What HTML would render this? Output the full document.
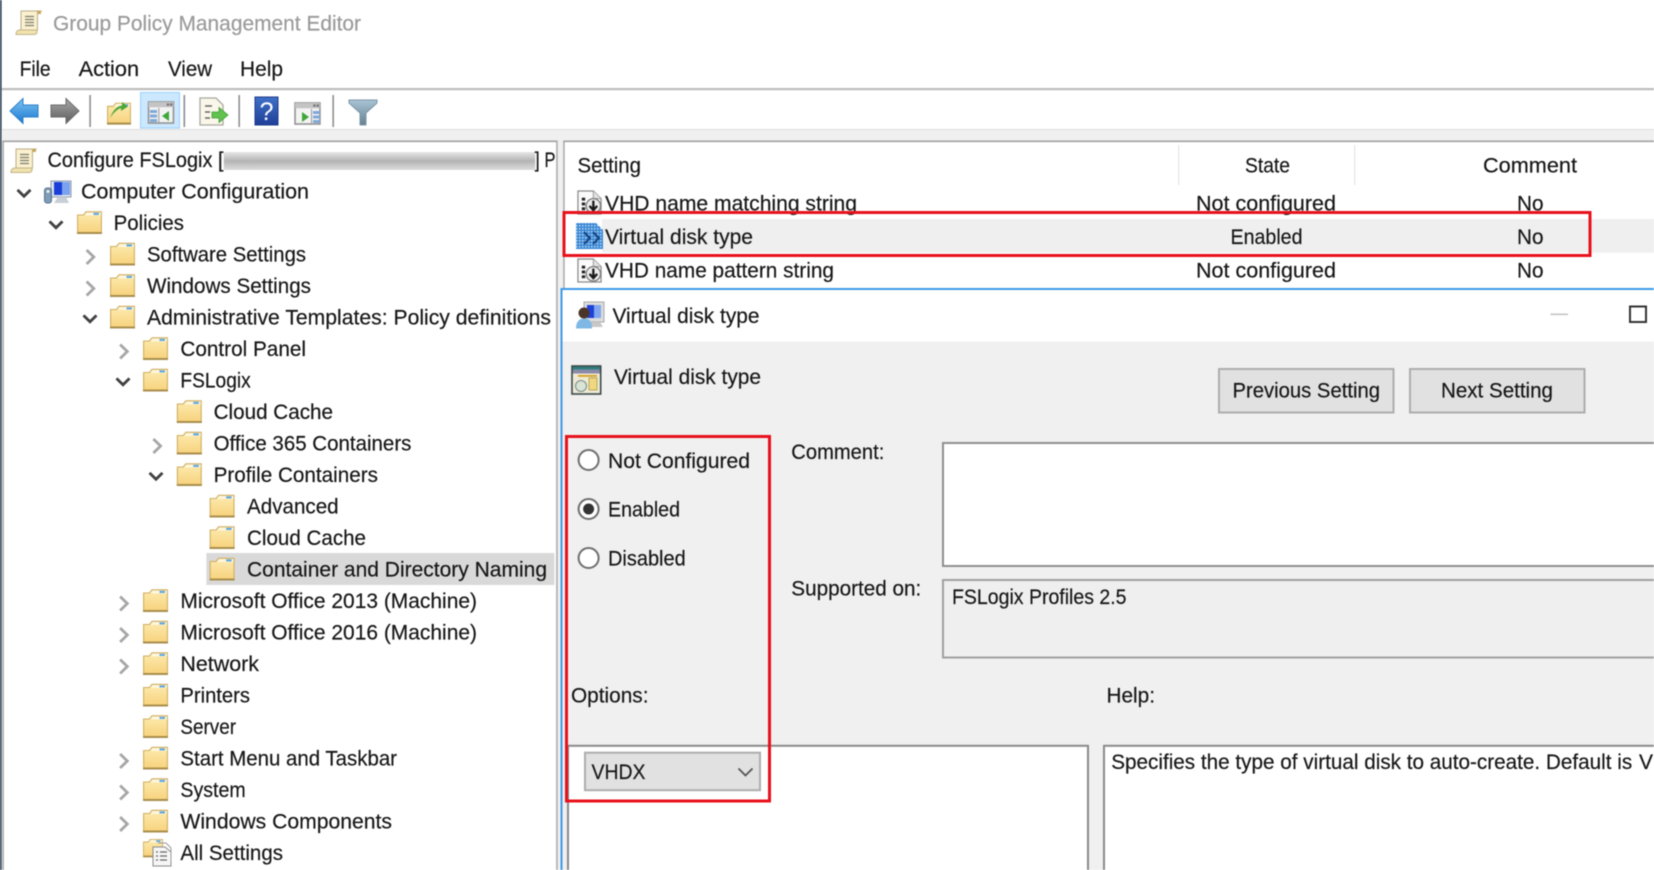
<!DOCTYPE html>
<html><head><meta charset="utf-8"><title>Group Policy Management Editor</title>
<style>
html,body{margin:0;padding:0;width:1654px;height:870px;overflow:hidden;background:#fff}
svg{display:block;filter:blur(0.45px)}
text{font-family:"Liberation Sans",sans-serif;font-size:21px;fill:#161616;stroke:#161616;stroke-width:.18px}
</style></head><body>
<svg xmlns="http://www.w3.org/2000/svg" width="1654" height="870" viewBox="0 0 1654 870">
<defs>
<linearGradient id="fg" x1="0" y1="0" x2="0" y2="1"><stop offset="0" stop-color="#fdebb0"/><stop offset="1" stop-color="#f7d27c"/></linearGradient>
<linearGradient id="bar" x1="0" y1="0" x2="0" y2="1"><stop offset="0" stop-color="#e6e6e6"/><stop offset=".5" stop-color="#b4b4b4"/><stop offset="1" stop-color="#dcdcdc"/></linearGradient>
<linearGradient id="blue" x1="0" y1="0" x2="0" y2="1"><stop offset="0" stop-color="#7fc4f2"/><stop offset="1" stop-color="#1a78d0"/></linearGradient>
<linearGradient id="grey" x1="0" y1="0" x2="0" y2="1"><stop offset="0" stop-color="#a8a8a8"/><stop offset="1" stop-color="#5c5c5c"/></linearGradient>
<linearGradient id="help" x1="0" y1="0" x2="0" y2="1"><stop offset="0" stop-color="#3f70c8"/><stop offset="1" stop-color="#1f3f98"/></linearGradient>
<linearGradient id="fun" x1="0" y1="0" x2="0" y2="1"><stop offset="0" stop-color="#a9c4d6"/><stop offset="1" stop-color="#66808f"/></linearGradient>
<pattern id="dots" width="3" height="3" patternUnits="userSpaceOnUse"><rect width="3" height="3" fill="#3a88d4"/><rect width="1.5" height="1.5" fill="#bcd8f4"/></pattern>

<symbol id="fo" viewBox="0 0 25 23" overflow="visible">
<path d="M.6 22.5V4H6.5L9 .8H24.400V22.5Z" fill="url(#fg)" stroke="#cfae62" stroke-width="1.1"/>
<path d="M9.5 1.5H23.800V4.500H7.500Z" fill="#fdf6dc"/>
<rect x="16.5" y="1.800" width="5.5" height="2.2" fill="#62a8dc"/>
<rect x="0" y="21" width="25" height="2" fill="#a88e4c"/>
</symbol>

<symbol id="sc" viewBox="0 0 25 25" overflow="visible">
<path d="M5 1H25L21.5 4V20H5Z" fill="#fbf1cf" stroke="#b9ad86"/>
<path d="M0 24.5C0 20 3 20 5 20H21V22C21 24 19 24.5 17 24.5Z" fill="#f1e3ae" stroke="#c1b388"/>
<path d="M9 6.5H18M9 9.5H18M9 12.5H18M9 15.5H18" stroke="#7c7c70" stroke-width="1.3"/>
<rect x="21" y="1" width="4" height="3" fill="#c8a860"/>
</symbol>

<symbol id="doc" viewBox="0 0 26 26" overflow="visible">
<path d="M1 1H17L25 9V25H1Z" fill="#fafafa" stroke="#8a8a8a" stroke-width="1.3"/>
<path d="M17 1V9H25" fill="#e2e2e2" stroke="#9a9a9a"/>
<rect x="5" y="8" width="3.5" height="3" fill="#222"/><rect x="5" y="13" width="3.5" height="3" fill="#222"/><rect x="5" y="18" width="3.5" height="3" fill="#222"/>
<circle cx="17" cy="16.5" r="7.5" fill="#ededed" stroke="#777" stroke-width="1.3"/>
<path d="M17 11V20M13 16.5L17 21L21 16.5" fill="none" stroke="#1a1a1a" stroke-width="2.4"/>
</symbol>

<symbol id="pn" viewBox="0 0 28 24" overflow="visible">
<rect x="1" y="1" width="26" height="22" fill="#f3f3f3" stroke="#8f8f8f" stroke-width="1.6"/>
<rect x="1" y="1" width="26" height="5.5" fill="#c4c4c4"/>
<rect x="20" y="2.5" width="2.5" height="2.5" fill="#777"/><rect x="23.5" y="2.5" width="2.5" height="2.5" fill="#777"/>
</symbol>

<path id="cr" d="M-3.6 -7L3.6 0L-3.6 7" fill="none" stroke="#a6a6a6" stroke-width="2.8"/>
<path id="cd" d="M-6.5 -3.6L0 2.8L6.5 -3.6" fill="none" stroke="#404040" stroke-width="2.8"/>
</defs>

<!-- backgrounds -->
<rect width="1654" height="870" fill="#fff"/>
<rect x="0" y="0" width="1.6" height="870" fill="#24384c"/>
<rect x="1.6" y="88" width="1653" height="2.2" fill="#bdbdbd"/>
<rect x="1.6" y="129" width="1653" height="12" fill="#f0f0f0"/>
<rect x="1.6" y="129" width="1653" height="1" fill="#dcdcdc"/>
<rect x="3" y="141" width="554" height="729" fill="#fff"/>
<rect x="2.4" y="140.5" width="555" height="1.6" fill="#a0a0a0"/>
<rect x="2.4" y="140.5" width="1.4" height="730" fill="#a0a0a0"/>
<rect x="556.2" y="140.5" width="1.6" height="730" fill="#a8a8a8"/>
<rect x="557.8" y="141" width="5.4" height="729" fill="#f0f0f0"/>
<rect x="563.2" y="140.5" width="1091" height="1.6" fill="#a0a0a0"/>
<rect x="563.2" y="140.5" width="1.5" height="150" fill="#a8a8a8"/>

<!-- title -->
<use href="#sc" x="16" y="10" width="25" height="25"/>
<text x="53" y="30.5" textLength="308" lengthAdjust="spacingAndGlyphs" style="fill:#9a9a9a;stroke:#9a9a9a">Group Policy Management Editor</text>
<text x="19.6" y="76" textLength="31" lengthAdjust="spacingAndGlyphs">File</text>
<text x="78.6" y="76" textLength="60.5" lengthAdjust="spacingAndGlyphs">Action</text>
<text x="168" y="76" textLength="44" lengthAdjust="spacingAndGlyphs">View</text>
<text x="240" y="76" textLength="43" lengthAdjust="spacingAndGlyphs">Help</text>

<!-- toolbar -->
<path d="M10 111L23 98.5V105H38V117H23V123.5Z" fill="url(#blue)" stroke="#2c7fc8" stroke-width="1"/>
<path d="M79 111L66 98.5V105H51V117H66V123.5Z" fill="url(#grey)" stroke="#6a6a6a" stroke-width="1"/>
<rect x="89.3" y="95" width="1.6" height="32" fill="#8e8e8e"/>
<use href="#fo" x="107" y="102" width="24" height="23"/>
<path d="M110 118C113 110 117 106 122 105.5V102L128 106.5L121 111V108C118 109 114 112 110 118Z" fill="#4ea63a"/>
<rect x="140.5" y="92.5" width="39" height="35.5" fill="#cce8ff" stroke="#99d1ff"/>
<use href="#pn" x="147" y="101" width="28" height="23"/>
<rect x="150" y="110" width="7" height="3" fill="#7fa8d8"/><rect x="150" y="114.5" width="7" height="3" fill="#7fa8d8"/><rect x="150" y="119" width="7" height="3" fill="#7fa8d8"/>
<rect x="158.3" y="108" width="1" height="15" fill="#999"/>
<path d="M169 111V121L162 116Z" fill="#3ea63a"/>
<rect x="183.5" y="95" width="1.6" height="32" fill="#8e8e8e"/>
<path d="M200 98H216L223 105V125H200Z" fill="#faf7ea" stroke="#a8a8a0" stroke-width="1.3"/>
<path d="M205 106H212M205 112H210M205 118H210" stroke="#666" stroke-width="1.6"/>
<path d="M212 112H219V107.5L228 115L219 122.5V118H212Z" fill="#62c24e" stroke="#3c9c3a" stroke-width=".8"/>
<rect x="238.4" y="95" width="1.6" height="32" fill="#8e8e8e"/>
<rect x="255" y="97" width="23" height="28" fill="url(#help)" stroke="#1d3a8c"/>
<text x="259.5" y="120" textLength="14" lengthAdjust="spacingAndGlyphs" style="fill:#fff;stroke:none;font-size:25px">?</text>
<use href="#pn" x="293" y="102" width="29" height="23"/>
<rect x="313" y="111" width="7" height="3" fill="#7fa8d8"/><rect x="313" y="115.5" width="7" height="3" fill="#7fa8d8"/><rect x="313" y="120" width="7" height="3" fill="#7fa8d8"/>
<rect x="311" y="109" width="1" height="15" fill="#999"/>
<path d="M302 112V122L309 117Z" fill="#3ea63a"/>
<rect x="332.4" y="95" width="1.6" height="32" fill="#8e8e8e"/>
<path d="M349 100H377V103L366 113V125H360V113L349 103Z" fill="url(#fun)" stroke="#7b97a8"/>

<!-- tree -->
<rect x="206.4" y="553" width="348" height="32" fill="#d9d9d9"/>
<use href="#sc" x="11" y="148" width="25" height="25"/>
<text x="47.5" y="167" textLength="176" lengthAdjust="spacingAndGlyphs">Configure FSLogix [</text>
<rect x="223.8" y="152" width="311.4" height="18" fill="url(#bar)"/>
<text x="534.8" y="167" textLength="5" lengthAdjust="spacingAndGlyphs">]</text>
<text x="544.5" y="167" textLength="11" lengthAdjust="spacingAndGlyphs">P</text>

<g transform="translate(24 193.5)"><use href="#cd"/></g>
<rect x="51" y="181" width="20" height="16" fill="#dfe6f0" stroke="#8d9aa8"/>
<path d="M54 182H70V195H54Z" fill="#1a3fd8"/><path d="M62 182H70V195H62Z" fill="#7aa2ee"/>
<path d="M58 197H66L69 203H54Z" fill="#c8ced6"/>
<rect x="44.5" y="188" width="7" height="15" rx="2.5" fill="#7f9cb8" stroke="#55718c"/><circle cx="48" cy="191.5" r="1.4" fill="#ffe"/>
<text x="81" y="198.5" textLength="228" lengthAdjust="spacingAndGlyphs">Computer Configuration</text>

<g transform="translate(56 225)"><use href="#cd"/></g>
<use href="#fo" x="77" y="211" width="25" height="23"/>
<text x="113.6" y="230" textLength="70.4" lengthAdjust="spacingAndGlyphs">Policies</text>

<g transform="translate(90.2 257)"><use href="#cr"/></g>
<use href="#fo" x="110" y="242.5" width="25" height="23"/>
<text x="147" y="261.5" textLength="159" lengthAdjust="spacingAndGlyphs">Software Settings</text>

<g transform="translate(90.2 288.5)"><use href="#cr"/></g>
<use href="#fo" x="110" y="274" width="25" height="23"/>
<text x="147" y="293" textLength="164" lengthAdjust="spacingAndGlyphs">Windows Settings</text>

<g transform="translate(90 319)"><use href="#cd"/></g>
<use href="#fo" x="110" y="305.5" width="25" height="23"/>
<text x="147" y="324.5" textLength="404" lengthAdjust="spacingAndGlyphs">Administrative Templates: Policy definitions</text>

<g transform="translate(123.7 351.5)"><use href="#cr"/></g>
<use href="#fo" x="143" y="337" width="25" height="23"/>
<text x="180.4" y="356" textLength="125.6" lengthAdjust="spacingAndGlyphs">Control Panel</text>

<g transform="translate(123 382)"><use href="#cd"/></g>
<use href="#fo" x="143" y="368.5" width="25" height="23"/>
<text x="180.4" y="387.5" textLength="70.3" lengthAdjust="spacingAndGlyphs">FSLogix</text>

<use href="#fo" x="176.8" y="400" width="25" height="23"/>
<text x="213.6" y="419" textLength="119.4" lengthAdjust="spacingAndGlyphs">Cloud Cache</text>

<g transform="translate(157 446)"><use href="#cr"/></g>
<use href="#fo" x="176.8" y="431.5" width="25" height="23"/>
<text x="213.6" y="450.5" textLength="197.8" lengthAdjust="spacingAndGlyphs">Office 365 Containers</text>

<g transform="translate(156 476.500)"><use href="#cd"/></g>
<use href="#fo" x="176.8" y="463" width="25" height="23"/>
<text x="213.6" y="482" textLength="164.4" lengthAdjust="spacingAndGlyphs">Profile Containers</text>

<use href="#fo" x="209.6" y="494.5" width="25" height="23"/>
<text x="247" y="513.500" textLength="91.6" lengthAdjust="spacingAndGlyphs">Advanced</text>

<use href="#fo" x="209.6" y="526" width="25" height="23"/>
<text x="247" y="545" textLength="119" lengthAdjust="spacingAndGlyphs">Cloud Cache</text>

<use href="#fo" x="209.6" y="557.5" width="25" height="23"/>
<text x="247" y="576.5" textLength="300" lengthAdjust="spacingAndGlyphs">Container and Directory Naming</text>

<g transform="translate(123.7 603.500)"><use href="#cr"/></g>
<use href="#fo" x="143" y="589" width="25" height="23"/>
<text x="180.4" y="608" textLength="296.6" lengthAdjust="spacingAndGlyphs">Microsoft Office 2013 (Machine)</text>

<g transform="translate(123.7 635)"><use href="#cr"/></g>
<use href="#fo" x="143" y="620.5" width="25" height="23"/>
<text x="180.4" y="639.5" textLength="296.6" lengthAdjust="spacingAndGlyphs">Microsoft Office 2016 (Machine)</text>

<g transform="translate(123.7 666.500)"><use href="#cr"/></g>
<use href="#fo" x="143" y="652" width="25" height="23"/>
<text x="180.4" y="671" textLength="78.6" lengthAdjust="spacingAndGlyphs">Network</text>

<use href="#fo" x="143" y="683.5" width="25" height="23"/>
<text x="180.4" y="702.5" textLength="69.6" lengthAdjust="spacingAndGlyphs">Printers</text>

<use href="#fo" x="143" y="715" width="25" height="23"/>
<text x="180.4" y="734" textLength="55.6" lengthAdjust="spacingAndGlyphs">Server</text>

<g transform="translate(123.7 761)"><use href="#cr"/></g>
<use href="#fo" x="143" y="746.5" width="25" height="23"/>
<text x="180.4" y="765.5" textLength="216.6" lengthAdjust="spacingAndGlyphs">Start Menu and Taskbar</text>

<g transform="translate(123.7 792.500)"><use href="#cr"/></g>
<use href="#fo" x="143" y="778" width="25" height="23"/>
<text x="180.4" y="797" textLength="65.3" lengthAdjust="spacingAndGlyphs">System</text>

<g transform="translate(123.7 824)"><use href="#cr"/></g>
<use href="#fo" x="143" y="809.5" width="25" height="23"/>
<text x="180.4" y="828.5" textLength="211.6" lengthAdjust="spacingAndGlyphs">Windows Components</text>

<use href="#fo" x="143" y="838.5" width="20" height="19"/>
<path d="M153 847H165L171 852V866H153Z" fill="#f6f6f6" stroke="#8a8a8a"/>
<path d="M158 843H166L171 848V862" fill="none" stroke="#9a9a9a"/>
<path d="M156 852H158M156 856H158M156 860H158M160 852H167M160 856H167M160 860H167" stroke="#666" stroke-width="1.2"/>
<text x="180.4" y="860" textLength="102.6" lengthAdjust="spacingAndGlyphs">All Settings</text>

<!-- list pane -->
<rect x="1178" y="145" width="1.2" height="40" fill="#e5e5e5"/>
<rect x="1354" y="145" width="1.2" height="40" fill="#e5e5e5"/>
<text x="577.5" y="172.4" textLength="63.5" lengthAdjust="spacingAndGlyphs">Setting</text>
<text x="1245" y="172.4" textLength="45" lengthAdjust="spacingAndGlyphs">State</text>
<text x="1483" y="172.4" textLength="94" lengthAdjust="spacingAndGlyphs">Comment</text>

<rect x="602" y="219" width="1052" height="33.7" fill="#efefef"/>
<use href="#doc" x="576.5" y="190" width="26" height="25"/>
<text x="605" y="210.4" textLength="252" lengthAdjust="spacingAndGlyphs">VHD name matching string</text>
<text x="1196" y="210.4" textLength="140" lengthAdjust="spacingAndGlyphs">Not configured</text>
<text x="1517" y="210.4" textLength="26.5" lengthAdjust="spacingAndGlyphs">No</text>

<path d="M576 223H596L603 230V249H576Z" fill="url(#dots)"/>
<path d="M584 232L590 238L584 244M593 232L599 238L593 244" fill="none" stroke="#123f80" stroke-width="2"/>
<text x="605" y="243.8" textLength="148" lengthAdjust="spacingAndGlyphs">Virtual disk type</text>
<text x="1230.5" y="243.8" textLength="72" lengthAdjust="spacingAndGlyphs">Enabled</text>
<text x="1517" y="243.8" textLength="26.5" lengthAdjust="spacingAndGlyphs">No</text>

<use href="#doc" x="576.5" y="258" width="26" height="25"/>
<text x="605" y="277.4" textLength="229" lengthAdjust="spacingAndGlyphs">VHD name pattern string</text>
<text x="1196" y="277.4" textLength="140" lengthAdjust="spacingAndGlyphs">Not configured</text>
<text x="1517" y="277.4" textLength="26.5" lengthAdjust="spacingAndGlyphs">No</text>

<!-- dialog -->
<rect x="561" y="288" width="1093" height="582" fill="#f0f0f0"/>
<rect x="562.5" y="290" width="1092" height="51.5" fill="#fff"/>
<rect x="560.5" y="288" width="1094" height="2" fill="#3d9ae8"/>
<rect x="560.5" y="288" width="2" height="582" fill="#3d9ae8"/>

<rect x="584" y="302" width="20" height="20" fill="#dcdcdc" stroke="#a8a8a8"/>
<rect x="587" y="305" width="14" height="13" fill="#1f40d8"/><rect x="594" y="305" width="7" height="13" fill="#7fa6ee"/>
<path d="M590 322H600L603 327H588Z" fill="#c8c8c8"/>
<circle cx="584" cy="313" r="5.5" fill="#4a3428"/>
<path d="M576 328.500C576 321 580 318.500 584 318.500C589 318.500 592 321 592 328.500Z" fill="#7fb8e4"/>
<text x="612.5" y="322.800" textLength="147" lengthAdjust="spacingAndGlyphs">Virtual disk type</text>
<rect x="1550.5" y="313.5" width="17.500" height="1.6" fill="#c4c4c4"/>
<rect x="1630" y="306.500" width="16" height="15.500" fill="none" stroke="#333" stroke-width="2"/>

<rect x="572" y="366" width="28.7" height="28" fill="#eeead6"/>
<rect x="572" y="366" width="28.7" height="3.500" fill="#2f8080"/>
<rect x="572" y="369.500" width="28.7" height="4" fill="#8a8aa8"/>
<rect x="572" y="366" width="28.7" height="28" fill="none" stroke="#3a4a4a" stroke-width="1.6"/>
<circle cx="581" cy="386" r="5.500" fill="#d8e4d4" stroke="#7a8a8a"/>
<rect x="589" y="378" width="8" height="12" fill="#f0d880" stroke="#b8a860"/>
<rect x="578" y="375" width="19" height="1.8" fill="#d8a020"/>
<text x="614" y="384" textLength="147" lengthAdjust="spacingAndGlyphs">Virtual disk type</text>

<rect x="1219" y="369" width="174.5" height="43.500" fill="#e1e1e1" stroke="#adadad" stroke-width="2"/>
<text x="1232.5" y="397.7" textLength="147.5" lengthAdjust="spacingAndGlyphs">Previous Setting</text>
<rect x="1410" y="369" width="174.500" height="43.500" fill="#e1e1e1" stroke="#adadad" stroke-width="2"/>
<text x="1441" y="397.7" textLength="112" lengthAdjust="spacingAndGlyphs">Next Setting</text>

<circle cx="588.6" cy="460" r="10" fill="#fff" stroke="#6f6f6f" stroke-width="2"/>
<circle cx="588.6" cy="509" r="10" fill="#fff" stroke="#6f6f6f" stroke-width="2"/>
<circle cx="588.6" cy="509" r="5.500" fill="#333"/>
<circle cx="588.6" cy="558" r="10" fill="#fff" stroke="#6f6f6f" stroke-width="2"/>
<text x="608" y="467.800" textLength="142" lengthAdjust="spacingAndGlyphs">Not Configured</text>
<text x="608" y="516.7" textLength="72" lengthAdjust="spacingAndGlyphs">Enabled</text>
<text x="608" y="565.7" textLength="77.7" lengthAdjust="spacingAndGlyphs">Disabled</text>

<text x="791.3" y="459" textLength="93" lengthAdjust="spacingAndGlyphs">Comment:</text>
<rect x="943" y="443" width="720" height="123" fill="#fff" stroke="#8f8f8f" stroke-width="2"/>
<text x="791.3" y="595.7" textLength="130" lengthAdjust="spacingAndGlyphs">Supported on:</text>
<rect x="943" y="580" width="720" height="77.5" fill="#efefef" stroke="#a0a0a0" stroke-width="2"/>
<text x="952" y="604" textLength="174.500" lengthAdjust="spacingAndGlyphs">FSLogix Profiles 2.5</text>

<text x="571" y="702.400" textLength="77.500" lengthAdjust="spacingAndGlyphs">Options:</text>
<text x="1106.500" y="702.400" textLength="48.500" lengthAdjust="spacingAndGlyphs">Help:</text>

<rect x="568" y="745.8" width="520" height="140" fill="#fff" stroke="#8a8a8a" stroke-width="2"/>
<rect x="1104" y="745.8" width="560" height="140" fill="#fff" stroke="#8a8a8a" stroke-width="2"/>
<text x="1111.2" y="769" textLength="521" lengthAdjust="spacingAndGlyphs">Specifies the type of virtual disk to auto-create. Default is</text>
<text x="1639" y="769">VHD</text>

<rect x="585" y="752.700" width="175" height="37.500" fill="#e1e1e1" stroke="#adadad" stroke-width="2"/>
<text x="591.5" y="779" textLength="54" lengthAdjust="spacingAndGlyphs">VHDX</text>
<path d="M738.500 768.500L745.500 775.500L752.500 768.500" fill="none" stroke="#555" stroke-width="1.800"/>

<!-- red annotation boxes -->
<rect x="564" y="212.500" width="1026" height="43" fill="none" stroke="#e8101a" stroke-width="3"/>
<rect x="566.500" y="436.500" width="203" height="364.500" fill="none" stroke="#e8101a" stroke-width="3"/>
</svg>
</body></html>
